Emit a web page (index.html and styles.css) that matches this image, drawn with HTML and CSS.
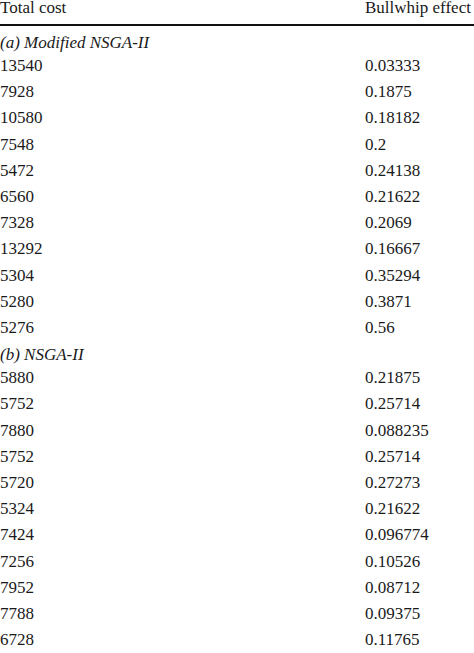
FILE: index.html
```html
<!DOCTYPE html>
<html lang="en">
<head>
<meta charset="utf-8">
<title>Total cost vs Bullwhip effect</title>
<link rel="stylesheet" href="styles.css">
</head>
<body>
<div class="table">
  <div class="row head"><span class="c1">Total cost</span><span class="c2">Bullwhip effect</span></div>
  <div class="row section"><span class="c1">(a) Modified NSGA-II</span></div>
  <div class="row data"><span class="c1">13540</span><span class="c2">0.03333</span></div>
  <div class="row data"><span class="c1">7928</span><span class="c2">0.1875</span></div>
  <div class="row data"><span class="c1">10580</span><span class="c2">0.18182</span></div>
  <div class="row data"><span class="c1">7548</span><span class="c2">0.2</span></div>
  <div class="row data"><span class="c1">5472</span><span class="c2">0.24138</span></div>
  <div class="row data"><span class="c1">6560</span><span class="c2">0.21622</span></div>
  <div class="row data"><span class="c1">7328</span><span class="c2">0.2069</span></div>
  <div class="row data"><span class="c1">13292</span><span class="c2">0.16667</span></div>
  <div class="row data"><span class="c1">5304</span><span class="c2">0.35294</span></div>
  <div class="row data"><span class="c1">5280</span><span class="c2">0.3871</span></div>
  <div class="row data"><span class="c1">5276</span><span class="c2">0.56</span></div>
  <div class="row section"><span class="c1">(b) NSGA-II</span></div>
  <div class="row data"><span class="c1">5880</span><span class="c2">0.21875</span></div>
  <div class="row data"><span class="c1">5752</span><span class="c2">0.25714</span></div>
  <div class="row data"><span class="c1">7880</span><span class="c2">0.088235</span></div>
  <div class="row data"><span class="c1">5752</span><span class="c2">0.25714</span></div>
  <div class="row data"><span class="c1">5720</span><span class="c2">0.27273</span></div>
  <div class="row data"><span class="c1">5324</span><span class="c2">0.21622</span></div>
  <div class="row data"><span class="c1">7424</span><span class="c2">0.096774</span></div>
  <div class="row data"><span class="c1">7256</span><span class="c2">0.10526</span></div>
  <div class="row data"><span class="c1">7952</span><span class="c2">0.08712</span></div>
  <div class="row data"><span class="c1">7788</span><span class="c2">0.09375</span></div>
  <div class="row data"><span class="c1">6728</span><span class="c2">0.11765</span></div>
</div>
</body>
</html>
```
FILE: styles.css
```css
html, body {
  margin: 0;
  padding: 0;
  background: #ffffff;
  overflow: hidden;
}

body {
  font-family: "Liberation Serif", "Times New Roman", serif;
  font-size: 17px;
  color: #1a1a1a;
}

.table {
  width: 474px;
}

.row {
  display: flex;
  white-space: nowrap;
}

.c1 {
  width: 365px;
  flex: none;
}

.c2 {
  flex: none;
}

.head {
  line-height: 15px;
  padding-bottom: 9px;
  border-bottom: 2px solid #111111;
  margin-bottom: 3px;
}

.section {
  font-style: italic;
  line-height: 20px;
  padding-top: 4px;
}

.data {
  line-height: 26.2px;
}
```
